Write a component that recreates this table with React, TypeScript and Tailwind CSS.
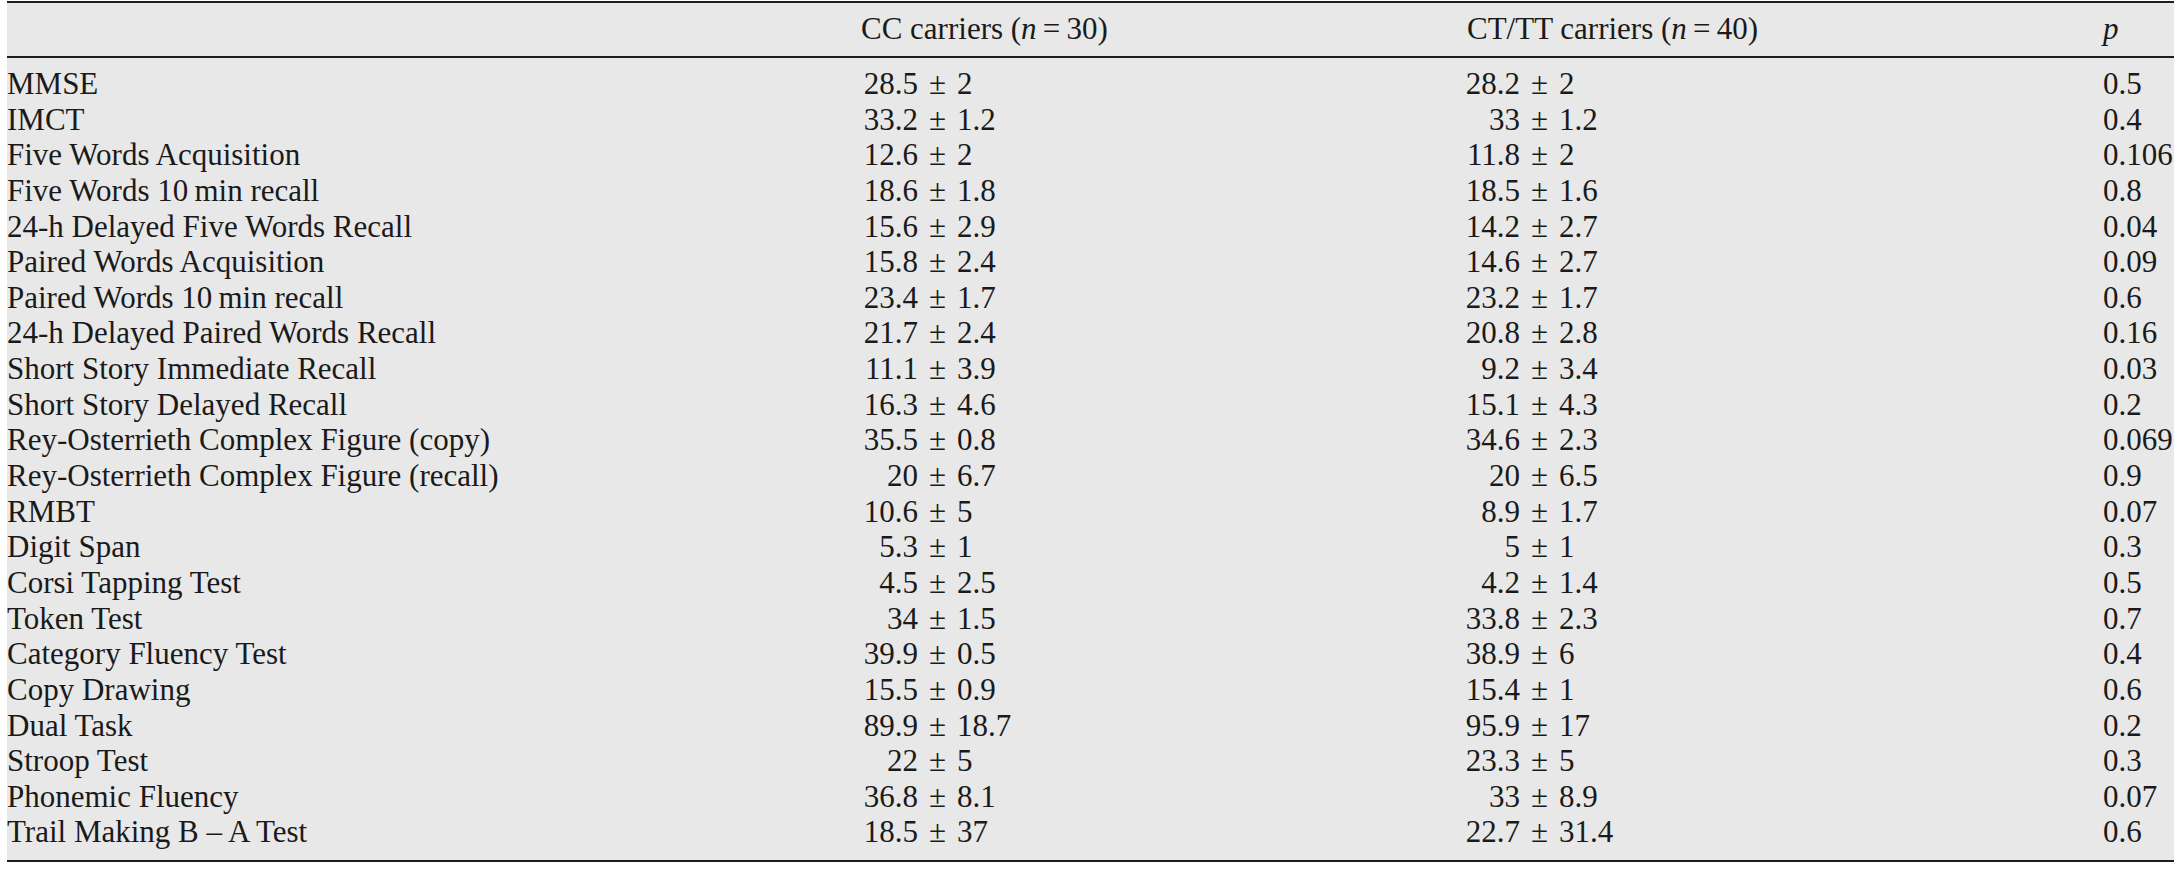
import React from 'react'

type Row = {
  label: string
  cc: [string, string]
  ct: [string, string]
  p: string
}

const rows: Row[] = [
  { label: 'MMSE', cc: ['28.5', '2'], ct: ['28.2', '2'], p: '0.5' },
  { label: 'IMCT', cc: ['33.2', '1.2'], ct: ['33', '1.2'], p: '0.4' },
  { label: 'Five Words Acquisition', cc: ['12.6', '2'], ct: ['11.8', '2'], p: '0.106' },
  { label: 'Five Words 10\u2009min recall', cc: ['18.6', '1.8'], ct: ['18.5', '1.6'], p: '0.8' },
  { label: '24-h Delayed Five Words Recall', cc: ['15.6', '2.9'], ct: ['14.2', '2.7'], p: '0.04' },
  { label: 'Paired Words Acquisition', cc: ['15.8', '2.4'], ct: ['14.6', '2.7'], p: '0.09' },
  { label: 'Paired Words 10\u2009min recall', cc: ['23.4', '1.7'], ct: ['23.2', '1.7'], p: '0.6' },
  { label: '24-h Delayed Paired Words Recall', cc: ['21.7', '2.4'], ct: ['20.8', '2.8'], p: '0.16' },
  { label: 'Short Story Immediate Recall', cc: ['11.1', '3.9'], ct: ['9.2', '3.4'], p: '0.03' },
  { label: 'Short Story Delayed Recall', cc: ['16.3', '4.6'], ct: ['15.1', '4.3'], p: '0.2' },
  { label: 'Rey-Osterrieth Complex Figure (copy)', cc: ['35.5', '0.8'], ct: ['34.6', '2.3'], p: '0.069' },
  { label: 'Rey-Osterrieth Complex Figure (recall)', cc: ['20', '6.7'], ct: ['20', '6.5'], p: '0.9' },
  { label: 'RMBT', cc: ['10.6', '5'], ct: ['8.9', '1.7'], p: '0.07' },
  { label: 'Digit Span', cc: ['5.3', '1'], ct: ['5', '1'], p: '0.3' },
  { label: 'Corsi Tapping Test', cc: ['4.5', '2.5'], ct: ['4.2', '1.4'], p: '0.5' },
  { label: 'Token Test', cc: ['34', '1.5'], ct: ['33.8', '2.3'], p: '0.7' },
  { label: 'Category Fluency Test', cc: ['39.9', '0.5'], ct: ['38.9', '6'], p: '0.4' },
  { label: 'Copy Drawing', cc: ['15.5', '0.9'], ct: ['15.4', '1'], p: '0.6' },
  { label: 'Dual Task', cc: ['89.9', '18.7'], ct: ['95.9', '17'], p: '0.2' },
  { label: 'Stroop Test', cc: ['22', '5'], ct: ['23.3', '5'], p: '0.3' },
  { label: 'Phonemic Fluency', cc: ['36.8', '8.1'], ct: ['33', '8.9'], p: '0.07' },
  { label: 'Trail Making B \u2013 A Test', cc: ['18.5', '37'], ct: ['22.7', '31.4'], p: '0.6' },
]

// mean ± sd, lined up on the ± sign
function MeanSd({ v }: { v: [string, string] }) {
  return (
    <div className="flex whitespace-nowrap">
      <span className="w-[57px] text-right">{v[0]}</span>
      <span className="mx-[11px]">{'\u00b1'}</span>
      <span>{v[1]}</span>
    </div>
  )
}

const cols = 'grid grid-cols-[854px_602px_640px_1fr]'

export default function App() {
  return (
    <div className="min-h-screen bg-white pt-[1px] pl-[7px] text-[#1a1a1a] [font-family:'Liberation_Serif',serif] text-[31px]">
      <div className="bg-[#e8e8e8] border-t-[2px] border-b-[2px] border-[#1e1e1e]">
        {/* header */}
        <div className={`${cols} h-[55px] items-center border-b-[2px] border-[#1e1e1e]`}>
          <div />
          <div>
            CC carriers (<i>n</i>{'\u2009=\u2009'}30)
          </div>
          <div className="pl-[4px]">
            CT/TT carriers (<i>n</i>{'\u2009=\u2009'}40)
          </div>
          <div>
            <i>p</i>
          </div>
        </div>

        {/* body */}
        <div className="pt-[8px] pb-[10px]">
          {rows.map((r) => (
            <div key={r.label} className={`${cols} h-[35.65px] items-center leading-[35.65px]`}>
              <div className="whitespace-nowrap">{r.label}</div>
              <MeanSd v={r.cc} />
              <MeanSd v={r.ct} />
              <div>{r.p}</div>
            </div>
          ))}
        </div>
      </div>
    </div>
  )
}
